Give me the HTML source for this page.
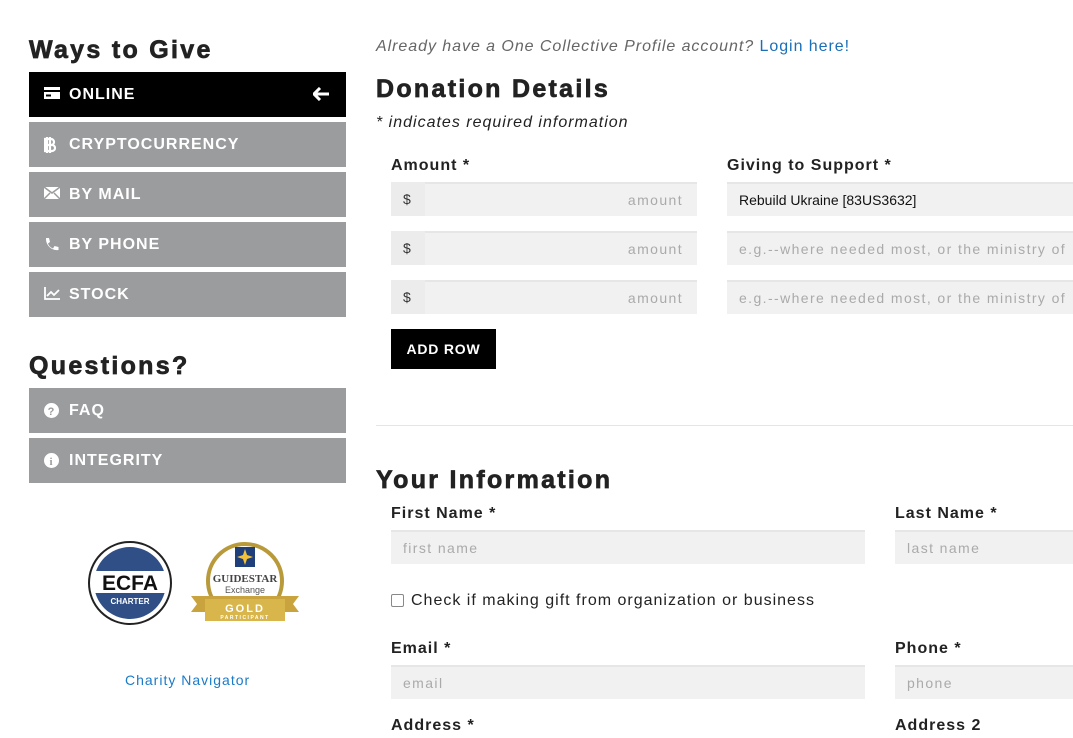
<!DOCTYPE html>
<html><head><meta charset="utf-8"><style>
*{box-sizing:border-box;margin:0;padding:0}
body{width:1073px;height:738px;overflow:hidden;background:#fff;font-family:"Liberation Sans",Arial,sans-serif;color:#222;position:relative}
.a{position:absolute}
h2{position:absolute;font-size:25px;font-weight:900;letter-spacing:2.3px;color:#222;-webkit-text-stroke:.7px #222}
.nav{position:absolute;left:29px;width:317px;height:45px;background:#9b9c9e;color:#fff;font-weight:bold;font-size:16px;letter-spacing:1px;line-height:45px;padding-left:40px}
.nav svg{position:absolute;left:15px;top:15px}
.lbl{position:absolute;font-size:16px;font-weight:bold;letter-spacing:1px;color:#222}
.in{position:absolute;height:34px;background:#f1f1f1;border-top:2px solid #e6e6e6;font-size:14px;color:#aaa;letter-spacing:1.4px;line-height:32px;padding-left:12px;white-space:nowrap;overflow:hidden}
.pre{position:absolute;width:34px;height:34px;background:#ececec;font-size:14px;color:#333;line-height:34px;padding-left:12px}
</style></head><body>
<h2 style="left:29px;top:36px">Ways to Give</h2>
<div class="nav" style="top:72px;background:#000">ONLINE
<svg width="16" height="13" viewBox="0 0 16 13"><rect x="0" y="0" width="16" height="12" fill="#fff"/><rect x="0" y="3" width="16" height="2" fill="#000"/><rect x="2" y="7.5" width="5" height="2" fill="#000"/></svg>
<svg style="left:284px;top:15px" width="16" height="14" viewBox="0 0 16 14"><path d="M7 1L1 7l6 6M1 7h15" stroke="#fff" stroke-width="3" fill="none"/></svg></div>
<div class="nav" style="top:122px">CRYPTOCURRENCY<svg width="12" height="16" viewBox="0 0 12 16"><path d="M1 2h6a3 3 0 010 6H1zM1 8h7a3 3 0 010 6H1zM3 0v16M6 0v16" stroke="#fff" stroke-width="2.2" fill="none"/></svg></div>
<div class="nav" style="top:172px">BY MAIL<svg width="16" height="12" viewBox="0 0 16 12"><rect width="16" height="12" fill="#fff"/><path d="M0 0l8 6 8-6M0 12l6-6M16 12l-6-6" stroke="#9b9c9e" stroke-width="1.5" fill="none"/></svg></div>
<div class="nav" style="top:222px">BY PHONE<svg width="15" height="15" viewBox="0 0 15 15"><path d="M2 1l3 0 1 4-2 1.5c1 2.5 2.5 4 5 5L10.5 9l4 1v3c-7 1-13-5-12.5-12z" fill="#fff"/></svg></div>
<div class="nav" style="top:272px">STOCK<svg width="16" height="13" viewBox="0 0 16 13"><path d="M1 0v12h15M3 9l4-4 3 3 5-5" stroke="#fff" stroke-width="1.8" fill="none"/></svg></div>
<h2 style="left:29px;top:352px">Questions?</h2>
<div class="nav" style="top:388px">FAQ<svg width="15" height="15" viewBox="0 0 15 15"><circle cx="7.5" cy="7.5" r="7.5" fill="#fff"/><text x="7.5" y="12" text-anchor="middle" font-size="11" font-weight="bold" fill="#9b9c9e" font-family="Liberation Sans">?</text></svg></div>
<div class="nav" style="top:438px">INTEGRITY<svg width="15" height="15" viewBox="0 0 15 15"><circle cx="7.5" cy="7.5" r="7.5" fill="#fff"/><text x="7.5" y="12" text-anchor="middle" font-size="11" font-weight="bold" fill="#9b9c9e" font-family="Liberation Serif">i</text></svg></div>
<svg class="a" style="left:88px;top:541px" width="84" height="84" viewBox="0 0 84 84"><circle cx="42" cy="42" r="41" fill="#fff" stroke="#222" stroke-width="2"/><circle cx="42" cy="42" r="36" fill="#2f4f86"/><rect x="6" y="30" width="72" height="22" fill="#fff"/><text x="42" y="49" text-anchor="middle" font-size="21" font-weight="900" fill="#111" font-family="Liberation Sans">ECFA</text><text x="42" y="63" text-anchor="middle" font-size="8" font-weight="bold" fill="#fff" font-family="Liberation Sans">CHARTER</text></svg>
<svg class="a" style="left:189px;top:541px" width="112" height="84" viewBox="0 0 112 84"><circle cx="56" cy="40" r="37" fill="#fff" stroke="#b89a3a" stroke-width="4"/><rect x="46" y="6" width="20" height="20" fill="#1f3f7a"/><path d="M56 8l2 6 6 2-6 2-2 6-2-6-6-2 6-2z" fill="#f3c23a"/><text x="56" y="41" text-anchor="middle" font-size="11" font-weight="bold" fill="#444" font-family="Liberation Serif">GUIDESTAR</text><text x="56" y="52" text-anchor="middle" font-size="9" fill="#555" font-family="Liberation Sans">Exchange</text><path d="M2 55h108l-6 8 6 8H2l6-8z" fill="#c9a43e"/><rect x="16" y="58" width="80" height="22" fill="#d9b64c"/><text x="56" y="71" text-anchor="middle" font-size="11" font-weight="bold" fill="#fff" letter-spacing="2" font-family="Liberation Sans">GOLD</text><text x="56" y="78" text-anchor="middle" font-size="5" font-weight="bold" fill="#fff" letter-spacing="1.5" font-family="Liberation Sans">PARTICIPANT</text></svg>
<div class="a" style="left:125px;top:672px;font-size:14px;color:#1a7bc9;letter-spacing:1px">Charity Navigator</div>

<div class="a" style="left:376px;top:38px;font-size:16px;font-style:italic;color:#666;letter-spacing:.95px">Already have a One Collective Profile account? <span style="font-style:normal;color:#1a6fb8">Login here!</span></div>
<h2 style="left:376px;top:75px">Donation Details</h2>
<div class="a" style="left:376px;top:114px;font-size:16px;font-style:italic;color:#222;letter-spacing:1px">* indicates required information</div>
<div class="lbl" style="left:391px;top:157px">Amount *</div>
<div class="lbl" style="left:727px;top:157px">Giving to Support *</div>

<div class="in" style="left:391px;top:182px;width:306px;text-align:right;padding-right:14px">amount</div><div class="pre" style="left:391px;top:182px">$</div>
<div class="in" style="left:391px;top:231px;width:306px;text-align:right;padding-right:14px">amount</div><div class="pre" style="left:391px;top:231px">$</div>
<div class="in" style="left:391px;top:280px;width:306px;text-align:right;padding-right:14px">amount</div><div class="pre" style="left:391px;top:280px">$</div>
<div class="in" style="left:727px;top:182px;width:360px;color:#111;letter-spacing:0">Rebuild Ukraine [83US3632]</div>
<div class="in" style="left:727px;top:231px;width:360px">e.g.--where needed most, or the ministry of</div>
<div class="in" style="left:727px;top:280px;width:360px">e.g.--where needed most, or the ministry of</div>
<div class="a" style="left:391px;top:329px;width:105px;height:40px;background:#000;color:#fff;font-size:14px;font-weight:bold;letter-spacing:.8px;line-height:40px;text-align:center">ADD ROW</div>
<div class="a" style="left:376px;top:425px;width:697px;height:1px;background:#e5e5e5"></div>
<h2 style="left:376px;top:466px">Your Information</h2>
<div class="lbl" style="left:391px;top:505px">First Name *</div>
<div class="lbl" style="left:895px;top:505px">Last Name *</div>
<div class="in" style="left:391px;top:530px;width:474px">first name</div>
<div class="in" style="left:895px;top:530px;width:190px">last name</div>
<div class="a" style="left:391px;top:594px;width:13px;height:13px;border:1px solid #888;border-radius:2px"></div>
<div class="a" style="left:411px;top:592px;font-size:16px;color:#222;letter-spacing:1px">Check if making gift from organization or business</div>
<div class="lbl" style="left:391px;top:640px">Email *</div>
<div class="lbl" style="left:895px;top:640px">Phone *</div>
<div class="in" style="left:391px;top:665px;width:474px">email</div>
<div class="in" style="left:895px;top:665px;width:190px">phone</div>
<div class="lbl" style="left:391px;top:717px">Address *</div>
<div class="lbl" style="left:895px;top:717px">Address 2</div>
</body></html>
